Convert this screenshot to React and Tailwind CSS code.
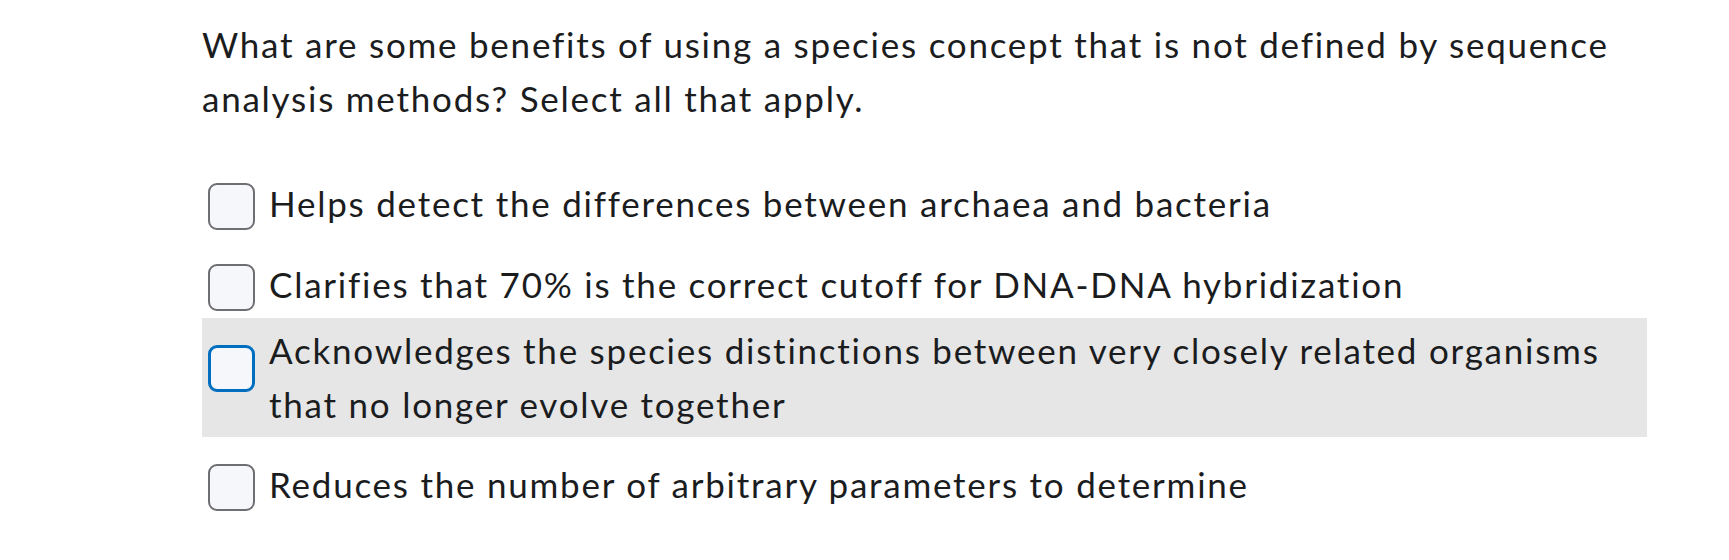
export default function App() {
  const Box = ({ active }) => (
    <div
      className={
        active
          ? "w-[47px] h-[47px] shrink-0 rounded-[9px] border-[3px] border-[#006fbf] bg-[#f5f7fb]"
          : "w-[47px] h-[47px] shrink-0 rounded-[9px] border-2 border-[#6e6e73] bg-[#f5f7fb]"
      }
    />
  );
  const txt = "text-[35px] leading-[54px] tracking-[1.76px] [font-variant-ligatures:none] -mt-[2px] pb-[2px]";
  return (
    <div
      className="w-[1729px] h-[560px] bg-white text-[#1b1c1e] pl-[202px] pt-[19px]"
      style={{ fontFamily: "Lato, 'Noto Sans', sans-serif" }}
    >
      <div className="w-[1445px]">
        <p className={txt}>
          What are some benefits of using a species concept that is not defined by sequence analysis methods? Select all that apply.
        </p>
        <div className="mt-[45px] flex flex-col">
          <div className="flex items-start py-[6px]">
            <div className="ml-[6px] mt-[5px]"><Box /></div>
            <span className={"ml-[14px] " + txt}>Helps detect the differences between archaea and bacteria</span>
          </div>
          <div className="flex items-start py-[6px] mt-[15px]">
            <div className="ml-[6px] mt-[5px]"><Box /></div>
            <span className={"ml-[14px] " + txt}>Clarifies that 70% is the correct cutoff for DNA-DNA hybridization</span>
          </div>
          <div className="flex items-start pt-[7px] pb-[4px] -mt-[1px] bg-[#e6e6e6]">
            <div className="ml-[6px] mt-[20px]"><Box active /></div>
            <span className={"ml-[14px] " + txt}>Acknowledges the species distinctions between very closely related organisms that no longer evolve together</span>
          </div>
          <div className="flex items-start py-[6px] mt-[16px]">
            <div className="ml-[6px] mt-[5px]"><Box /></div>
            <span className={"ml-[14px] " + txt}>Reduces the number of arbitrary parameters to determine</span>
          </div>
        </div>
      </div>
    </div>
  );
}
